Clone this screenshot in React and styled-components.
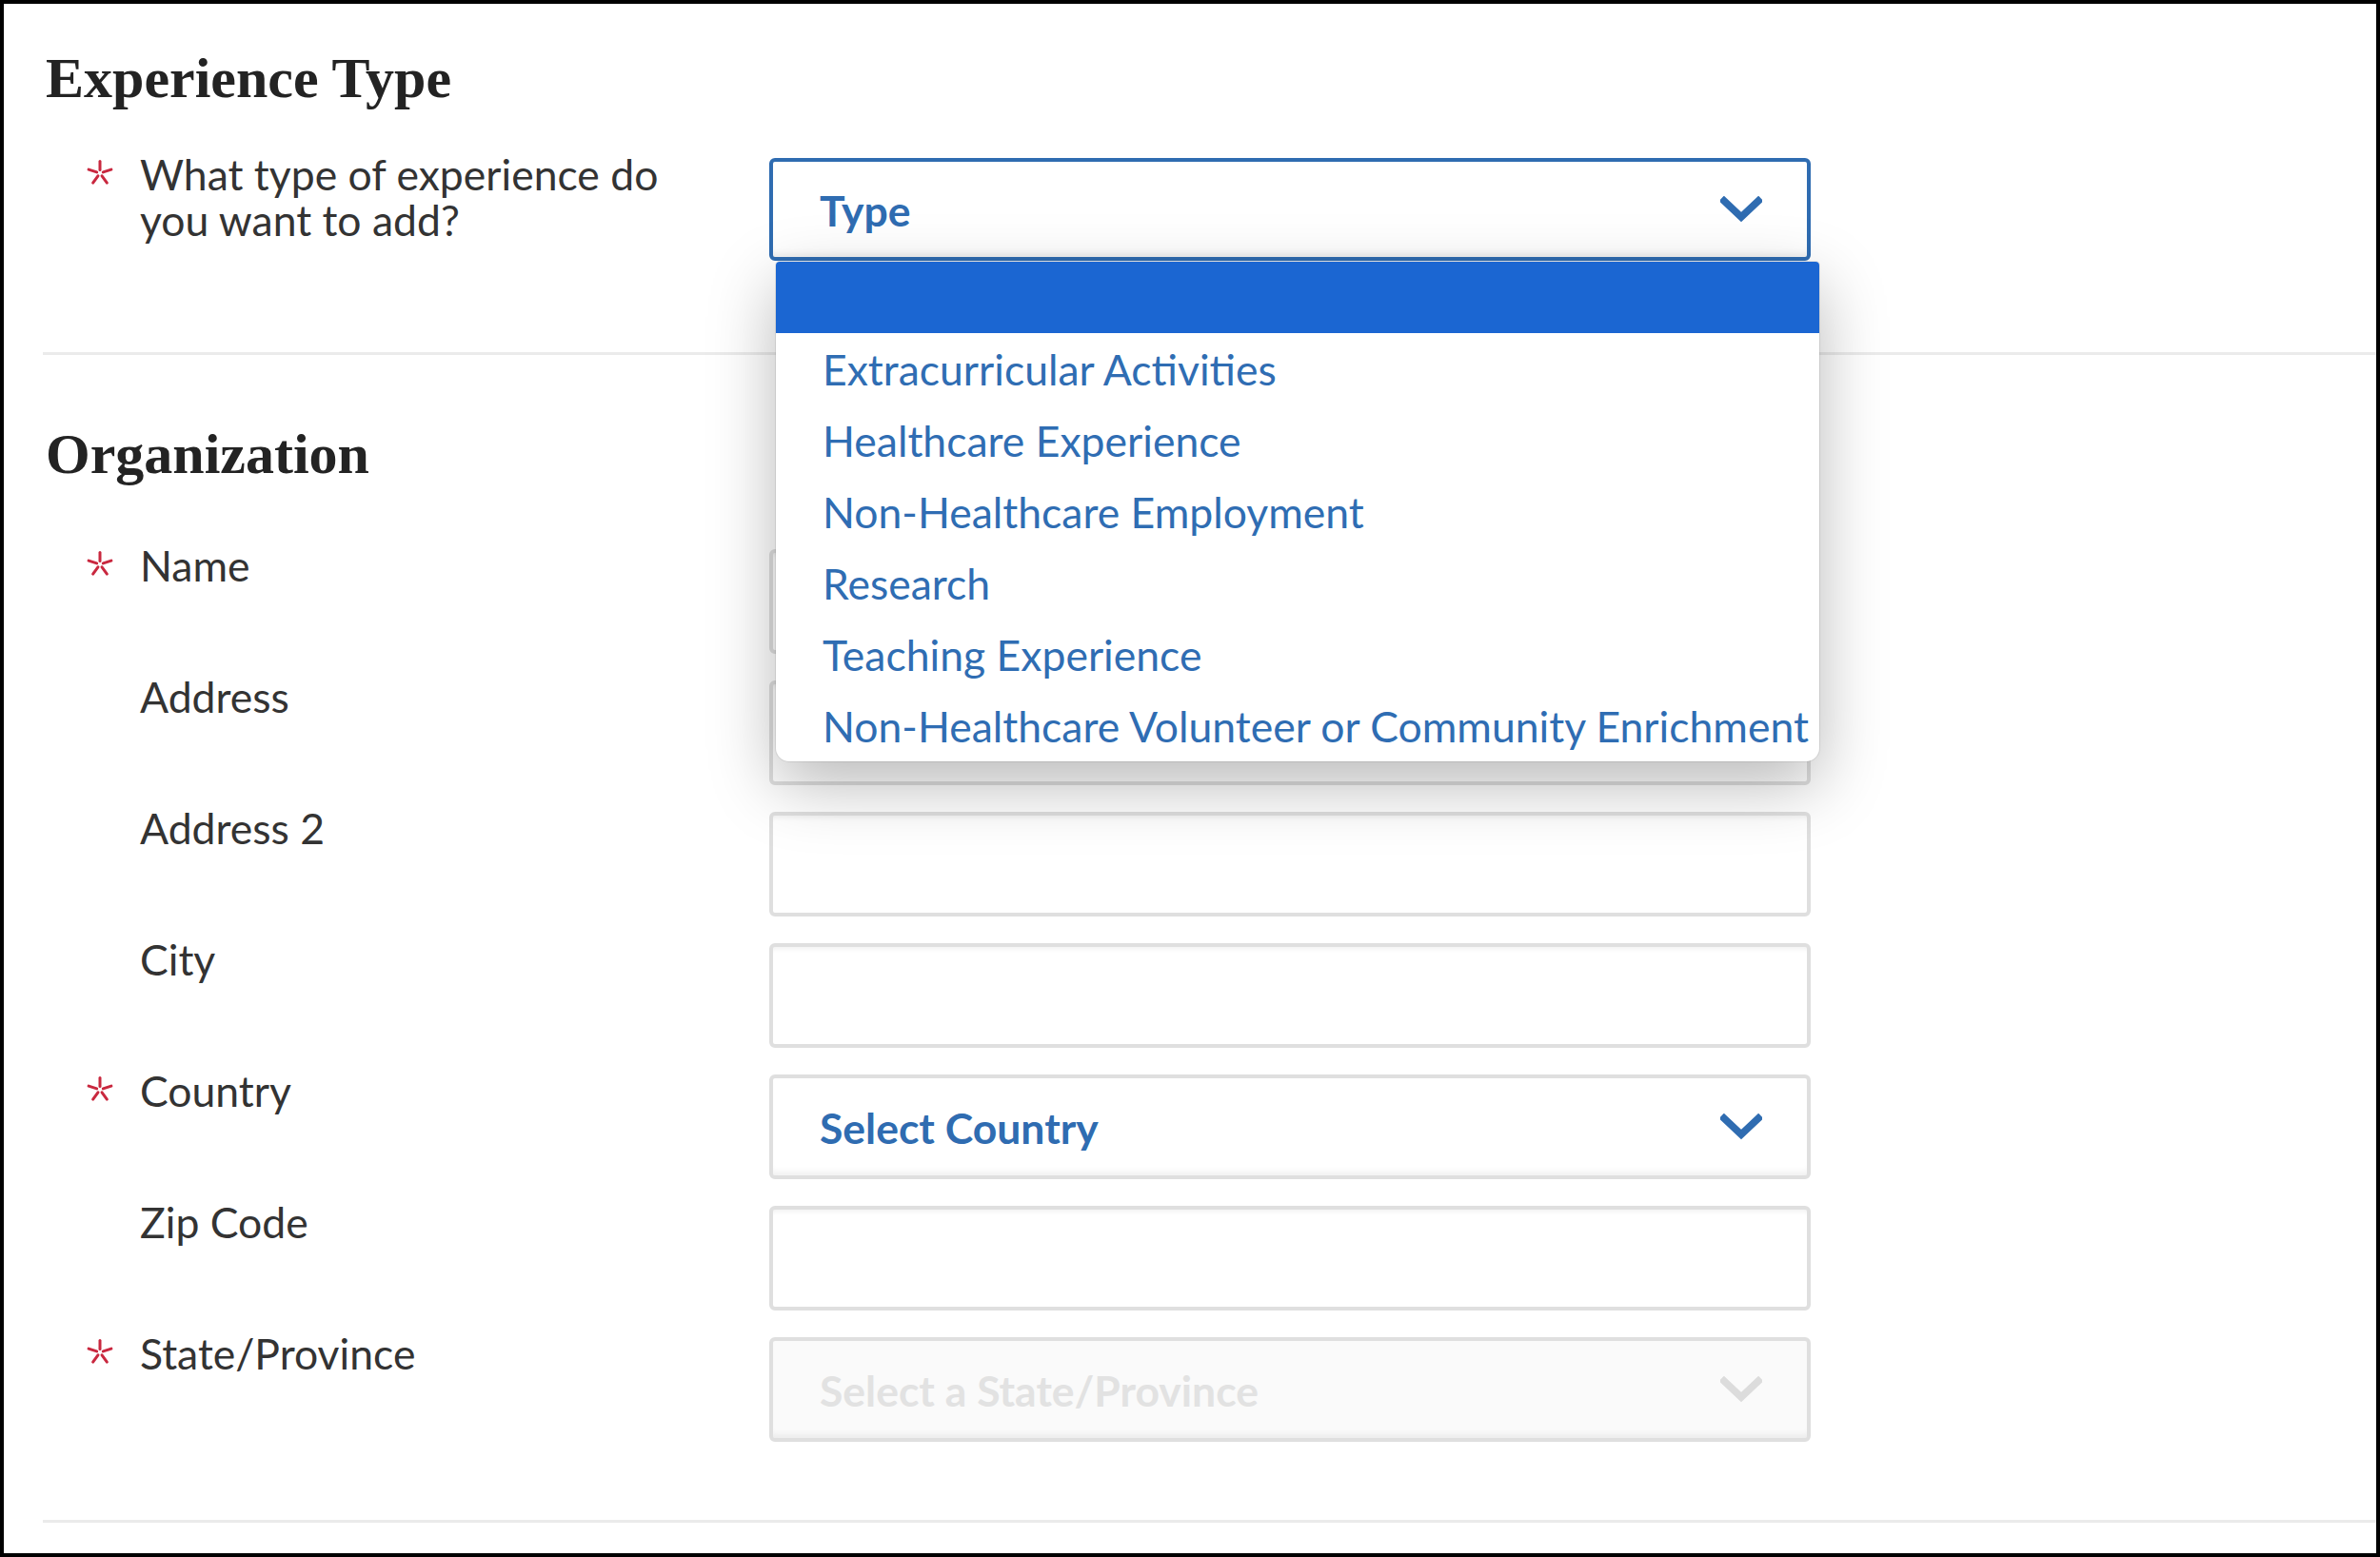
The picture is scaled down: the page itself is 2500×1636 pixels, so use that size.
import React from "react";
import styled, { createGlobalStyle } from "styled-components";

const Global = createGlobalStyle`
  html, body { margin: 0; padding: 0; background: #fff; }
  * { box-sizing: border-box; }
`;

const Frame = styled.div`
  width: 2500px;
  height: 1636px;
  border: 4px solid #000;
  padding: 48px 0 0 41px;
  overflow: hidden;
  background: #fff;
  font-family: Lato, "Open Sans", sans-serif;
`;

const Section = styled.section`
  border-bottom: 3px solid #ebebeb;
  padding-top: ${(p) => p.$top}px;
  padding-bottom: ${(p) => p.$bottom}px;
`;

const Heading = styled.h2`
  margin: 0 0 0 3px;
  font-family: "Liberation Serif", "Times New Roman", serif;
  font-weight: 700;
  font-size: 60px;
  line-height: 60px;
  color: #232323;
`;

const Fields = styled.div`
  margin: ${(p) => p.$gap}px 0 0 46px;
  display: flex;
  flex-direction: column;
  gap: 28px;
`;

const Row = styled.div`
  display: grid;
  grid-template-columns: 56px 661px 1094px;
  align-items: start;
`;

const Req = styled.div`
  width: 28px;
  height: 28px;
  margin-top: 1px;
  display: flex;
`;

const Label = styled.div`
  margin-top: -7px;
  max-width: 560px;
  font-size: 44.5px;
  line-height: 48px;
  color: #333;
`;

const FieldWrap = styled.div`
  position: relative;
`;

const TextBox = styled.div`
  height: 110px;
  border: 4px solid #dfdfdf;
  border-radius: 6px;
  background: #fff;
  box-shadow: inset 0 6px 5px -4px rgba(0, 0, 0, 0.06);
`;

const SelectBox = styled.div`
  height: ${(p) => (p.$focus ? 108 : 110)}px;
  border: 4px solid ${(p) => (p.$focus ? "#2f6cb1" : "#dfdfdf")};
  border-radius: 6px;
  background: ${(p) => (p.$disabled ? "#fafafa" : "#fff")};
  box-shadow: inset 0 -8px 6px -4px rgba(0, 0, 0, 0.06);
  display: flex;
  align-items: center;
  justify-content: space-between;
  padding: 0 47px 0 49px;
  font-size: 44.5px;
  font-weight: 700;
  color: ${(p) => (p.$disabled ? "#e2e2e2" : "#2f6cb1")};
  white-space: nowrap;
`;

const Menu = styled.ul`
  position: absolute;
  top: calc(100% + 1px);
  left: 7px;
  width: 1096px;
  margin: 0;
  padding: 0;
  list-style: none;
  background: #fff;
  border-radius: 4px 4px 14px 14px;
  overflow: hidden;
  box-shadow: 0 0 0 1px rgba(0, 0, 0, 0.08), 0 24px 70px rgba(0, 0, 0, 0.28);
  z-index: 10;
`;

const Item = styled.li`
  height: 75px;
  display: flex;
  align-items: center;
  padding-left: 49px;
  font-size: 44.5px;
  color: #2f6db3;
  white-space: nowrap;
  background: ${(p) => (p.$active ? "#1b66d2" : "transparent")};
`;

const Asterisk = () => (
  <svg width="28" height="28" viewBox="0 0 28 28">
    <g stroke="#c9283f" strokeWidth="3" strokeLinecap="round">
      {[-90, -18, 54, 126, 198].map((a) => {
        const r = (a * Math.PI) / 180;
        const c = 14;
        return (
          <line
            key={a}
            x1={c + Math.cos(r) * 3.5}
            y1={c + 1 + Math.sin(r) * 3.5}
            x2={c + Math.cos(r) * 12.5}
            y2={c + 1 + Math.sin(r) * 12.5}
          />
        );
      })}
    </g>
  </svg>
);

const Chevron = ({ color }) => (
  <svg width="44" height="28" viewBox="0 0 44 28">
    <polyline
      points="4,5 22,22 40,5"
      fill="none"
      stroke={color}
      strokeWidth="7.5"
      strokeLinecap="square"
    />
  </svg>
);

const options = [
  "",
  "Extracurricular Activities",
  "Healthcare Experience",
  "Non-Healthcare Employment",
  "Research",
  "Teaching Experience",
  "Non-Healthcare Volunteer or Community Enrichment",
];

const orgFields = [
  { label: "Name", req: true, kind: "text" },
  { label: "Address", kind: "text" },
  { label: "Address 2", kind: "text" },
  { label: "City", kind: "text" },
  { label: "Country", req: true, kind: "select", value: "Select Country" },
  { label: "Zip Code", kind: "text" },
  { label: "State/Province", req: true, kind: "select", value: "Select a State/Province", disabled: true },
];

export default function App() {
  return (
    <>
      <Global />
      <Frame>
        <Section $top={0} $bottom={96}>
          <Heading>Experience Type</Heading>
          <Fields $gap={54}>
            <Row>
              <Req><Asterisk /></Req>
              <Label>What type of experience do you want to add?</Label>
              <FieldWrap>
                <SelectBox $focus>
                  <span>Type</span>
                  <Chevron color="#2f6cb1" />
                </SelectBox>
                <Menu>
                  {options.map((o, i) => (
                    <Item key={i} $active={i === 0}>{o}</Item>
                  ))}
                </Menu>
              </FieldWrap>
            </Row>
          </Fields>
        </Section>
        <Section $top={74} $bottom={82}>
          <Heading>Organization</Heading>
          <Fields $gap={70}>
            {orgFields.map((f) => (
              <Row key={f.label}>
                <Req>{f.req && <Asterisk />}</Req>
                <Label>{f.label}</Label>
                <FieldWrap>
                  {f.kind === "text" ? (
                    <TextBox />
                  ) : (
                    <SelectBox $disabled={f.disabled}>
                      <span>{f.value}</span>
                      <Chevron color={f.disabled ? "#dcdcdc" : "#2f6cb1"} />
                    </SelectBox>
                  )}
                </FieldWrap>
              </Row>
            ))}
          </Fields>
        </Section>
      </Frame>
    </>
  );
}
